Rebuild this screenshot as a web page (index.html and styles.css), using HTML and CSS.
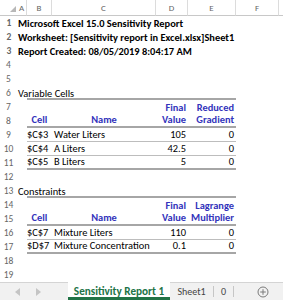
FILE: index.html
```html
<!DOCTYPE html>
<html lang="en">

<head>
    <meta charset="UTF-8">
    <meta name="viewport" content="width=device-width, initial-scale=1.0">
    <title>Sensitivity Report 1</title>
    <link rel="stylesheet" href="styles.css">
</head>

<body>
    <div class="sheet-wrap">
        <table class="sheet">
            <colgroup>
                <col class="c-num">
                <col class="c-a">
                <col class="c-b">
                <col class="c-c">
                <col class="c-d">
                <col class="c-e">
                <col class="c-f">
                <col class="c-g">
            </colgroup>
            <thead>
                <tr class="cols">
                    <th class="corner"><span class="tri"></span></th>
                    <th>A</th>
                    <th>B</th>
                    <th>C</th>
                    <th>D</th>
                    <th>E</th>
                    <th>F</th>
                    <th></th>
                </tr>
            </thead>
            <tbody>
                <tr class="title">
                    <td class="num">1</td>
                    <td colspan="7">Microsoft Excel 15.0 Sensitivity Report</td>
                </tr>
                <tr class="title">
                    <td class="num">2</td>
                    <td colspan="7">Worksheet: [Sensitivity report in Excel.xlsx]Sheet1</td>
                </tr>
                <tr class="title">
                    <td class="num">3</td>
                    <td colspan="7">Report Created: 08/05/2019 8:04:17 AM</td>
                </tr>
                <tr>
                    <td class="num">4</td>
                    <td colspan="7"></td>
                </tr>
                <tr>
                    <td class="num">5</td>
                    <td colspan="7"></td>
                </tr>
                <tr class="thick">
                    <td class="num">6</td>
                    <td class="lead">Variable Cells</td>
                    <td></td><td></td><td></td><td></td><td></td><td></td>
                </tr>
                <tr class="head">
                    <td class="num">7</td>
                    <td></td><td></td><td></td>
                    <td class="v">Final</td>
                    <td class="v">Reduced</td>
                    <td></td><td></td>
                </tr>
                <tr class="head thick">
                    <td class="num">8</td>
                    <td></td>
                    <td class="mid">Cell</td>
                    <td class="mid">Name</td>
                    <td class="v">Value</td>
                    <td class="v">Gradient</td>
                    <td></td><td></td>
                </tr>
                <tr class="thin">
                    <td class="num">9</td>
                    <td></td>
                    <td class="ref">$C$3</td>
                    <td>Water Liters</td>
                    <td class="v">105</td>
                    <td class="v">0</td>
                    <td></td><td></td>
                </tr>
                <tr class="thin">
                    <td class="num">10</td>
                    <td></td>
                    <td class="ref">$C$4</td>
                    <td>A Liters</td>
                    <td class="v">42.5</td>
                    <td class="v">0</td>
                    <td></td><td></td>
                </tr>
                <tr class="thick">
                    <td class="num">11</td>
                    <td></td>
                    <td class="ref">$C$5</td>
                    <td>B Liters</td>
                    <td class="v">5</td>
                    <td class="v">0</td>
                    <td></td><td></td>
                </tr>
                <tr>
                    <td class="num">12</td>
                    <td colspan="7"></td>
                </tr>
                <tr class="thick">
                    <td class="num">13</td>
                    <td class="lead">Constraints</td>
                    <td></td><td></td><td></td><td></td><td></td><td></td>
                </tr>
                <tr class="head">
                    <td class="num">14</td>
                    <td></td><td></td><td></td>
                    <td class="v">Final</td>
                    <td class="v">Lagrange</td>
                    <td></td><td></td>
                </tr>
                <tr class="head thick">
                    <td class="num">15</td>
                    <td></td>
                    <td class="mid">Cell</td>
                    <td class="mid">Name</td>
                    <td class="v">Value</td>
                    <td class="v">Multiplier</td>
                    <td></td><td></td>
                </tr>
                <tr class="thin">
                    <td class="num">16</td>
                    <td></td>
                    <td class="ref">$C$7</td>
                    <td>Mixture Liters</td>
                    <td class="v">110</td>
                    <td class="v">0</td>
                    <td></td><td></td>
                </tr>
                <tr class="thick">
                    <td class="num">17</td>
                    <td></td>
                    <td class="ref">$D$7</td>
                    <td>Mixture Concentration</td>
                    <td class="v">0.1</td>
                    <td class="v">0</td>
                    <td></td><td></td>
                </tr>
                <tr>
                    <td class="num">18</td>
                    <td colspan="7"></td>
                </tr>
                <tr>
                    <td class="num">19</td>
                    <td colspan="7"></td>
                </tr>
            </tbody>
        </table>
    </div>

    <div class="tabs">
        <div class="nav">
            <svg width="6" height="8" viewBox="0 0 6 8"><polygon points="5,0 5,8 0,4" fill="#c4c4c4" /></svg>
            <svg width="6" height="8" viewBox="0 0 6 8"><polygon points="1,0 1,8 6,4" fill="#c4c4c4" /></svg>
        </div>
        <div class="tab active">Sensitivity Report 1</div>
        <div class="tab">Sheet1</div>
        <div class="tab small">0</div>
        <div class="add">
            <svg width="12" height="12" viewBox="0 0 12 12">
                <circle cx="6" cy="6" r="5" fill="none" stroke="#7a7a7a" stroke-width="1" />
                <path d="M6 3.2v5.6M3.2 6h5.6" stroke="#7a7a7a" stroke-width="1" />
            </svg>
        </div>
    </div>
</body>

</html>
```

FILE: styles.css
```css
* {
    margin: 0;
    padding: 0;
    box-sizing: border-box;
}

body {
    width: 283px;
    height: 300px;
    overflow: hidden;
    background: #fff;
    font-family: Calibri, Carlito, Lato, sans-serif;
    font-size: 10.4px;
    color: #000;
}

.sheet-wrap {
    height: 282px;
    overflow: hidden;
}

.sheet {
    table-layout: fixed;
    border-collapse: separate;
    border-spacing: 0;
    width: 300px;
}

.c-num { width: 17px; }
.c-a { width: 10px; }
.c-b { width: 25px; }
.c-c { width: 104px; }
.c-d { width: 32px; }
.c-e { width: 48px; }
.c-f { width: 43px; }
.c-g { width: 21px; }

.cols {
    height: 16px;
}

.cols th {
    font-weight: normal;
    font-size: 9px;
    color: #666;
    background: #fff;
    border-right: 1px solid #dcdcdc;
    border-bottom: 1px solid #c8c8c8;
    vertical-align: middle;
}

.cols th.corner {
    position: relative;
    border-right: none;
}

.tri {
    position: absolute;
    right: 1px;
    bottom: 3px;
    width: 0;
    height: 0;
    border-left: 6px solid transparent;
    border-bottom: 6px solid #b8b8b8;
}

tbody tr {
    height: 14px;
}

td {
    padding: 0 2px;
    line-height: 12px;
    vertical-align: bottom;
    white-space: nowrap;
    overflow: visible;
}

td.num {
    padding: 0;
    text-align: center;
    font-size: 9.5px;
    color: #666;
    vertical-align: middle;
}

.title td {
    font-weight: bold;
    padding-left: 1px;
}

td.lead {
    padding-left: 1px;
}

td.ref {
    padding-left: 0;
}

.head td {
    color: #3333bb;
    font-weight: bold;
}

.head td.num {
    color: #666;
    font-weight: normal;
}

td.mid {
    text-align: center;
}

td.v {
    text-align: right;
}

.thick td:nth-child(n+3):nth-child(-n+6) {
    border-bottom: 2px solid #a6a6a6;
}

.thin td:nth-child(n+3):nth-child(-n+6) {
    border-bottom: 1px solid #bdbdbd;
}

.tabs {
    display: flex;
    align-items: stretch;
    height: 18px;
    background: #f1f1f1;
    border-top: 1px solid #d4d4d4;
    font-size: 10px;
}

.nav {
    width: 68px;
    display: flex;
    align-items: center;
    gap: 14px;
    padding-left: 15px;
}

.tab {
    display: flex;
    align-items: center;
    justify-content: center;
    width: 44px;
    color: #444;
    border-right: 1px solid #c6c6c6;
    margin: 3px 0;
}

.tab.small {
    width: 20px;
}

.tab.active {
    width: 102px;
    margin: -1px 0 0 0;
    background: #fff;
    color: #217346;
    font-size: 11.2px;
    font-weight: bold;
    border-right: none;
    border-bottom: 3px solid #217346;
    padding-top: 2px;
}

.add {
    display: flex;
    align-items: center;
    margin-left: 23px;
}
```
